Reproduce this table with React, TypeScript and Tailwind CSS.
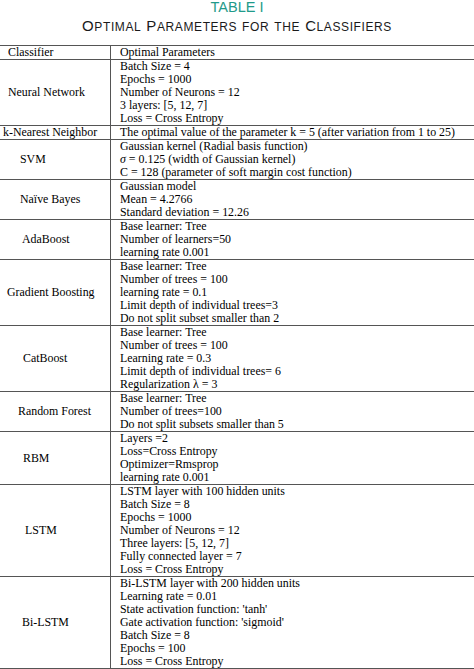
import React from 'react';

type Row = { name: string; pad: string; lines: React.ReactNode[] };

const rows: Row[] = [
  {
    name: 'Neural Network',
    pad: 'pl-[8px]',
    lines: ['Batch Size = 4', 'Epochs = 1000', 'Number of Neurons = 12', '3 layers: [5, 12, 7]', 'Loss = Cross Entropy'],
  },
  {
    name: 'k-Nearest Neighbor',
    pad: 'pl-[3px]',
    lines: ['The optimal value of the parameter k = 5 (after variation from 1 to 25)'],
  },
  {
    name: 'SVM',
    pad: 'pl-[20px]',
    lines: [
      'Gaussian kernel (Radial basis function)',
      <>
        <i>σ</i> = 0.125 (width of Gaussian kernel)
      </>,
      'C = 128 (parameter of soft margin cost function)',
    ],
  },
  {
    name: 'Naïve Bayes',
    pad: 'pl-[20px]',
    lines: ['Gaussian model', 'Mean = 4.2766', 'Standard deviation = 12.26'],
  },
  {
    name: 'AdaBoost',
    pad: 'pl-[22px]',
    lines: ['Base learner: Tree', 'Number of learners=50', 'learning rate 0.001'],
  },
  {
    name: 'Gradient Boosting',
    pad: 'pl-[7px]',
    lines: [
      'Base learner: Tree',
      'Number of trees = 100',
      'learning rate = 0.1',
      'Limit depth of individual trees=3',
      'Do not split subset smaller than 2',
    ],
  },
  {
    name: 'CatBoost',
    pad: 'pl-[23px]',
    lines: [
      'Base learner: Tree',
      'Number of trees = 100',
      'Learning rate = 0.3',
      'Limit depth of individual trees= 6',
      'Regularization λ = 3',
    ],
  },
  {
    name: 'Random Forest',
    pad: 'pl-[18px]',
    lines: ['Base learner: Tree', 'Number of trees=100', 'Do not split subsets smaller than 5'],
  },
  {
    name: 'RBM',
    pad: 'pl-[23px]',
    lines: ['Layers =2', 'Loss=Cross Entropy', 'Optimizer=Rmsprop', 'learning rate 0.001'],
  },
  {
    name: 'LSTM',
    pad: 'pl-[25px]',
    lines: [
      'LSTM layer with 100 hidden units',
      'Batch Size = 8',
      'Epochs = 1000',
      'Number of Neurons = 12',
      'Three layers: [5, 12, 7]',
      'Fully connected layer = 7',
      'Loss = Cross Entropy',
    ],
  },
  {
    name: 'Bi-LSTM',
    pad: 'pl-[22px]',
    lines: [
      'Bi-LSTM layer with 200 hidden units',
      'Learning rate = 0.01',
      "State activation function: 'tanh'",
      "Gate activation function: 'sigmoid'",
      'Batch Size = 8',
      'Epochs = 100',
      'Loss = Cross Entropy',
    ],
  },
];

function SmallCapsWord({ big, rest }: { big?: string; rest: string }) {
  return (
    <span>
      {big && <span className="text-[15px]">{big}</span>}
      <span className="text-[12px]">{rest}</span>
    </span>
  );
}

export default function App() {
  return (
    <div className="w-[474px] h-[669px] bg-white overflow-hidden text-black">
      <div className="text-center font-['Liberation_Sans',Arial,sans-serif]">
        <div className="text-[14.5px] leading-[15px] text-[#1f9a8a]">TABLE I</div>
        <div className="mt-[3px] leading-[16px] tracking-[0.6px] text-[#1a1a1a]">
          <SmallCapsWord big="O" rest="PTIMAL" /> <SmallCapsWord big="P" rest="ARAMETERS" />{' '}
          <SmallCapsWord rest="FOR" /> <SmallCapsWord rest="THE" /> <SmallCapsWord big="C" rest="LASSIFIERS" />
        </div>
      </div>

      <div className="mt-[10px] font-['Liberation_Serif','Times_New_Roman',serif] text-[11.9px] leading-[13px] border-b border-[#555]">
        <div className="grid grid-cols-[111px_1fr] border-t-[1.5px] border-[#555]">
          <div className="pl-[8px] border-r border-[#555]">Classifier</div>
          <div className="pl-[9px]">Optimal Parameters</div>
        </div>
        {rows.map((r) => (
          <div key={r.name} className="grid grid-cols-[111px_1fr] border-t border-[#555]">
            <div className={`flex items-center border-r border-[#555] ${r.pad}`}>{r.name}</div>
            <div className="pl-[9px] whitespace-nowrap">
              {r.lines.map((l, i) => (
                <div key={i}>{l}</div>
              ))}
            </div>
          </div>
        ))}
      </div>
    </div>
  );
}
